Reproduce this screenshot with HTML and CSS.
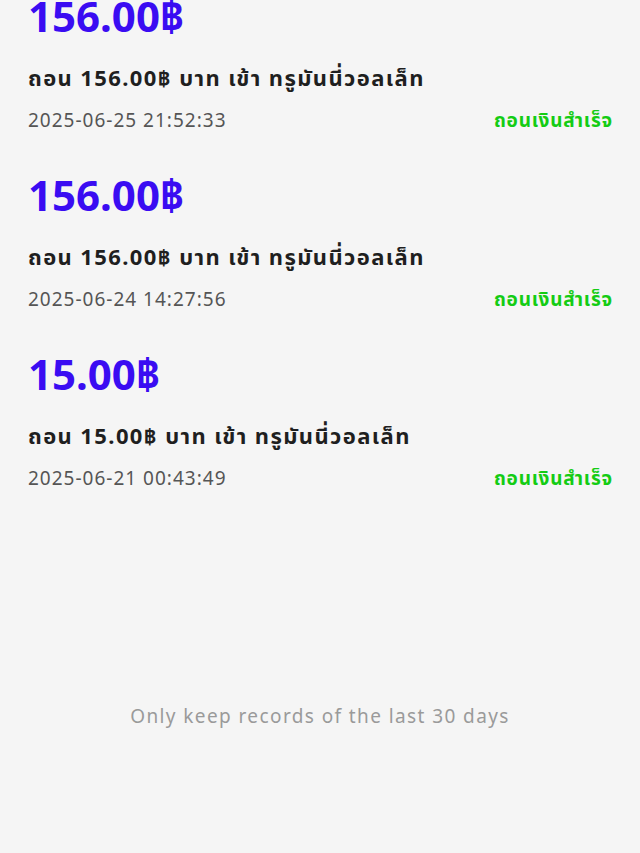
FILE: index.html
```html
<!DOCTYPE html>
<html>
	<head>
		<meta charset="utf-8">
		<link rel="stylesheet" href="styles.css">
	</head>
	<body>
		<section class="records">
			<div class="record">
				<div class="amount">156.00฿</div>
				<div class="title">ถอน 156.00฿ บาท เข้า ทรูมันนี่วอลเล็ท</div>
				<div class="meta">
					<span class="date">2025-06-25 21:52:33</span>
					<span class="status">ถอนเงินสำเร็จ</span>
				</div>
			</div>
			<div class="record">
				<div class="amount">156.00฿</div>
				<div class="title">ถอน 156.00฿ บาท เข้า ทรูมันนี่วอลเล็ท</div>
				<div class="meta">
					<span class="date">2025-06-24 14:27:56</span>
					<span class="status">ถอนเงินสำเร็จ</span>
				</div>
			</div>
			<div class="record">
				<div class="amount">15.00฿</div>
				<div class="title">ถอน 15.00฿ บาท เข้า ทรูมันนี่วอลเล็ท</div>
				<div class="meta">
					<span class="date">2025-06-21 00:43:49</span>
					<span class="status">ถอนเงินสำเร็จ</span>
				</div>
			</div>
		</section>
		<p class="note">Only keep records of the last 30 days</p>
	</body>
</html>
```

FILE: styles.css
```css
html, body {
	margin: 0;
	padding: 0;
	background: #f5f5f5;
	font-family: "Noto Sans", "Noto Sans Thai", "DejaVu Sans", sans-serif;
}

.records {
	margin-top: -14px;
	padding: 0 28px;
}

.record {
	height: 179px;
}

.amount {
	font-size: 42px;
	font-weight: bold;
	color: #3a0cf2;
	line-height: 60px;
}

.title {
	margin-top: 15px;
	font-size: 22px;
	font-weight: bold;
	color: #1f1f1f;
	line-height: 32px;
	letter-spacing: 1.4px;
}

.meta {
	margin-top: 11px;
	display: flex;
	justify-content: space-between;
	align-items: center;
	line-height: 32px;
}

.date {
	font-size: 19px;
	color: #555;
	letter-spacing: 1px;
}

.status {
	font-size: 19px;
	font-weight: bold;
	color: #14cc14;
	letter-spacing: 0.8px;
	margin-right: -1px;
}

.note {
	margin: 180px 0 0;
	text-align: center;
	font-size: 19px;
	color: #9a9a9a;
	letter-spacing: 1.4px;
}
```
